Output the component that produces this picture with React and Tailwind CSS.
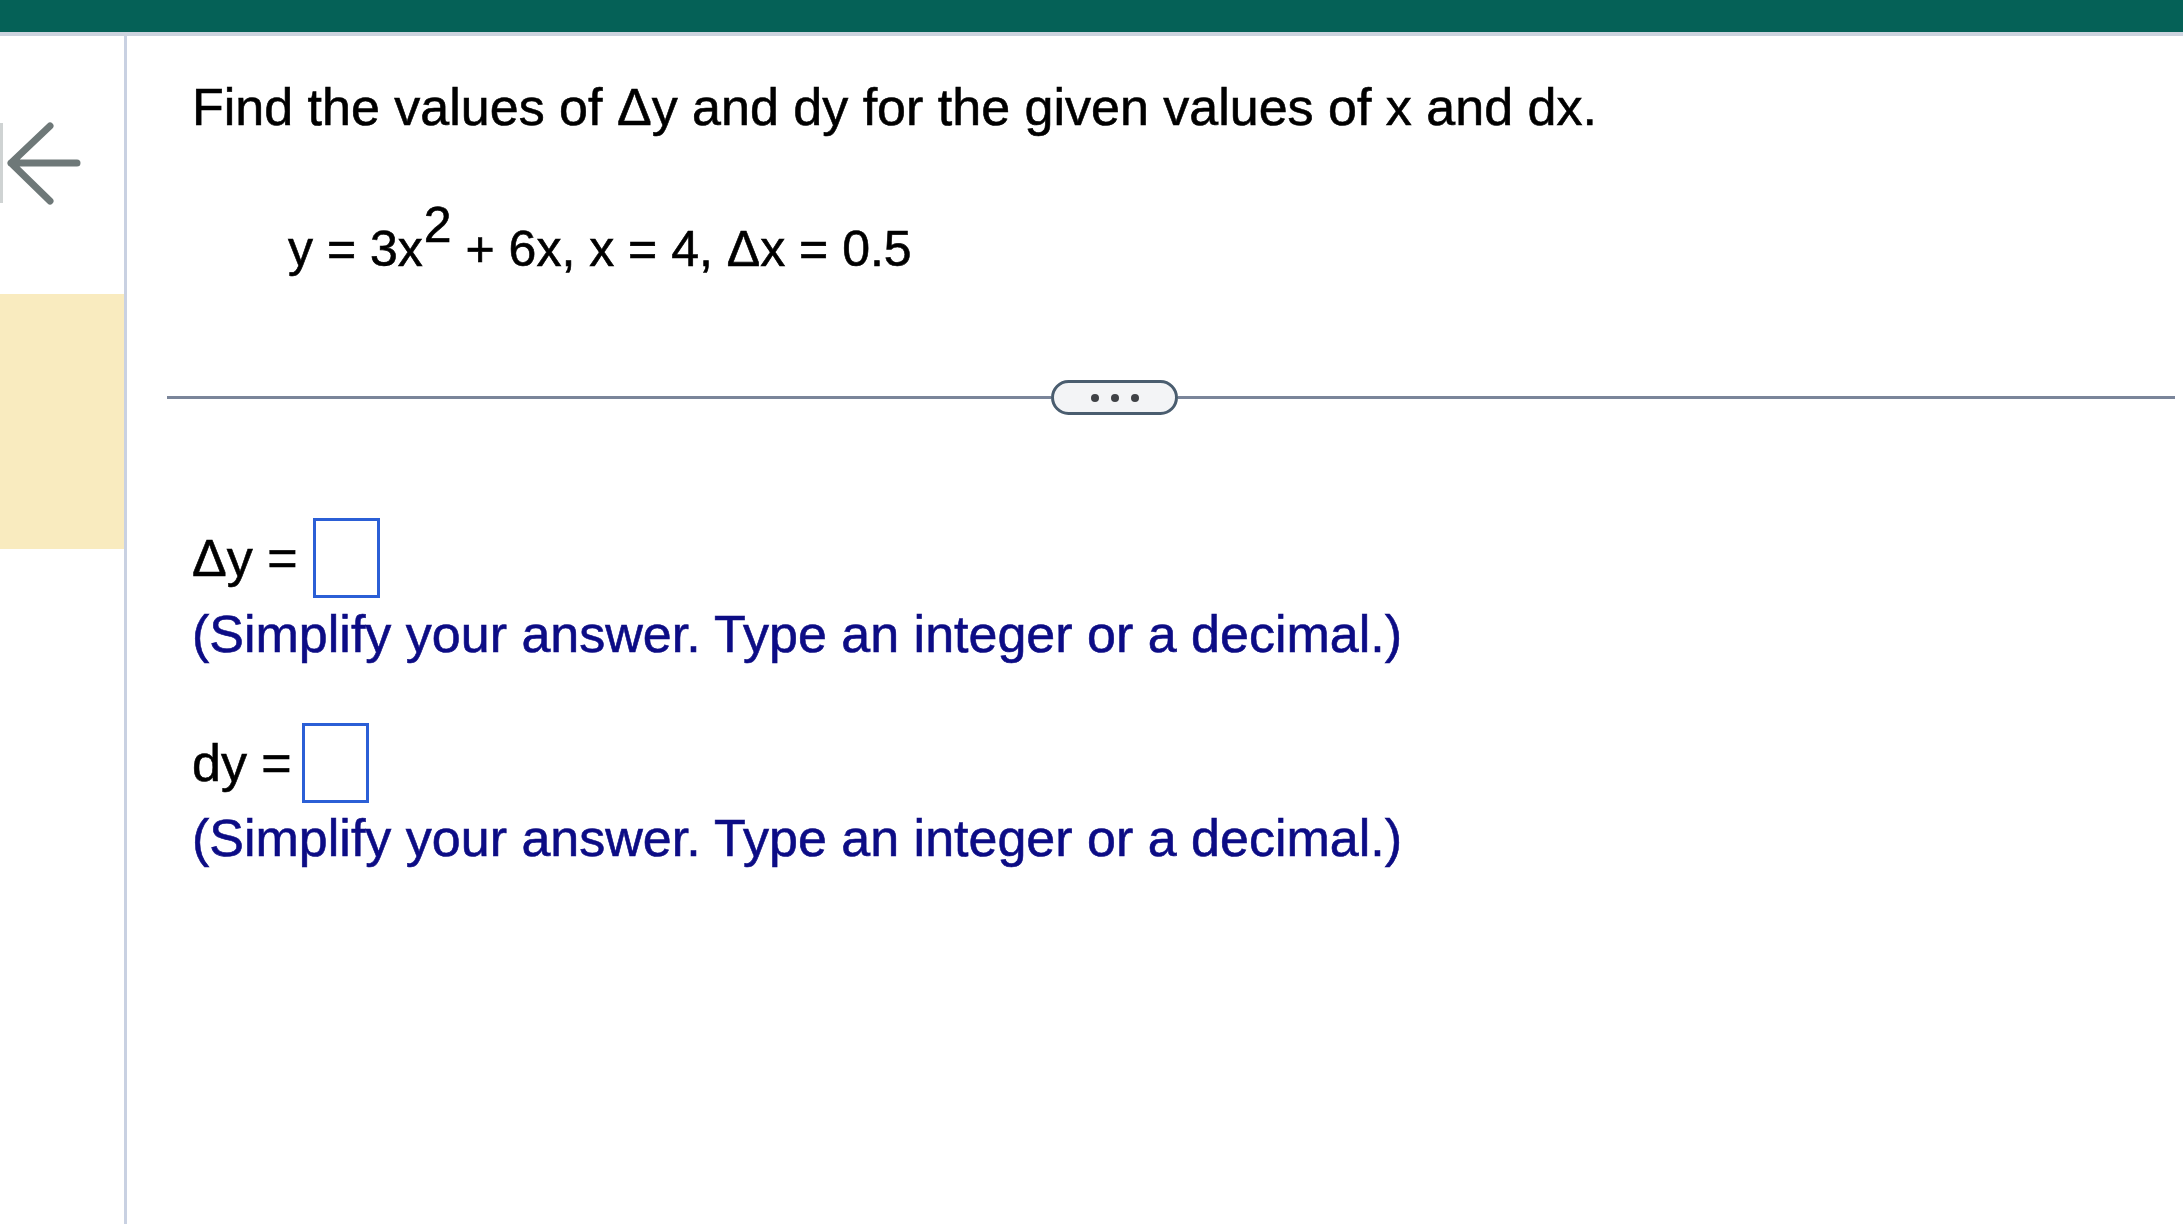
import React from 'react'

const AnswerBox = ({ gap }) => (
  <span className={`${gap} inline-block h-[80px] w-[67px] border-[3px] border-[#2b5fd6] bg-white`} />
)

const Hint = ({ className = '' }) => (
  <div className={`text-[52px] leading-[60px] text-[#0c0c85] ${className}`}>
    (Simplify your answer. Type an integer or a decimal.)
  </div>
)

const App = () => {
  return (
    <div className="flex min-h-screen flex-col bg-white font-['Liberation_Sans',Arial,Helvetica,sans-serif] text-black [-webkit-text-stroke:0.6px_currentColor]">
      {/* Top bar */}
      <div className="h-[32px] bg-[#056157]" />
      <div className="h-[4px] bg-[#ccd3de]" />

      <div className="flex flex-1">
        {/* Left rail */}
        <div className="flex w-[124px] flex-col">
          <div className="mt-[87px] flex items-start">
            <div className="h-[80px] w-[3px] bg-[#cfd3d3]" />
            <svg width="84" height="90" viewBox="0 0 84 90" className="-ml-[3px] -mt-[5px]" fill="none">
              <path
                d="M50 8 L11 45 L50 83 M11 45 H77"
                stroke="#6e7878"
                strokeWidth="7"
                strokeLinecap="round"
                strokeLinejoin="round"
              />
            </svg>
          </div>
          <div className="mt-[86px] h-[255px] bg-[#f9ebbf]" />
        </div>
        <div className="w-[3px] bg-[#c9d1e2]" />

        {/* Question */}
        <div className="flex-1 pt-[41px]">
          <div className="pl-[65px] text-[52px] leading-[60px]">
            Find the values of Δy and dy for the given values of x and dx.
          </div>

          <div className="mt-[82px] pl-[161px] text-[50px] leading-[60px]">
            y = 3x<span className="relative -top-[24px] ml-[1px]">2</span> + 6x, x = 4, Δx = 0.5
          </div>

          {/* Divider with expand button */}
          <div className="mt-[101px] ml-[40px] mr-[8px] flex h-[35px] items-center">
            <div className="h-[3px] w-[884px] bg-[#7a859a]" />
            <button className="flex h-[35px] w-[127px] items-center justify-center gap-[12px] rounded-full border-[3px] border-[#4a5d6f] bg-[#f3f4f6]">
              <span className="h-[8px] w-[8px] rounded-full bg-[#3f4246]" />
              <span className="h-[8px] w-[8px] rounded-full bg-[#3f4246]" />
              <span className="h-[8px] w-[8px] rounded-full bg-[#3f4246]" />
            </button>
            <div className="h-[3px] flex-1 bg-[#7a859a]" />
          </div>

          {/* Answers */}
          <div className="mt-[103px] pl-[65px]">
            <div className="flex h-[80px] items-center text-[52px] leading-[52px]">
              <span>Δy =</span>
              <AnswerBox gap="ml-[15px]" />
            </div>
            <Hint className="mt-[6px]" />

            <div className="mt-[59px] flex h-[80px] items-center text-[52px] leading-[52px]">
              <span>dy =</span>
              <AnswerBox gap="ml-[10px]" />
            </div>
            <Hint className="mt-[5px]" />
          </div>
        </div>
      </div>
    </div>
  )
}

export default App
